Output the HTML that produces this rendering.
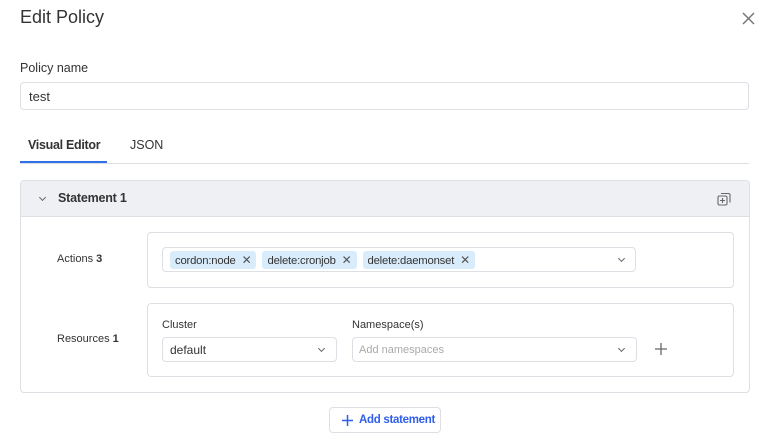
<!DOCTYPE html>
<html><head><style>
*{box-sizing:border-box;margin:0;padding:0}
body{width:768px;height:447px;background:#fff;font-family:"Liberation Sans",sans-serif;color:#333;position:relative;overflow:hidden;font-size:12px}
.a{position:absolute;white-space:nowrap}
.box{position:absolute;border:1px solid #dcdfe4;border-radius:4px;background:#fff}
.chip{display:inline-block;background:#d8ecfb;border-radius:3px;height:18px;line-height:18px;padding:0 5px;margin-right:6px;font-size:11.3px;color:#333;letter-spacing:-0.2px}
.chip span{color:#555;margin-left:6px;font-size:12px}
.chev{position:absolute;width:5px;height:5px;border-right:1.2px solid #666;border-bottom:1.2px solid #666;transform:rotate(45deg)}
</style></head><body>
<div class="a" style="left:20px;top:7px;font-size:18px;color:#333">Edit Policy</div>
<svg class="a" style="left:742px;top:12px" width="13" height="13"><path d="M1 1L12 12M12 1L1 12" stroke="#777" stroke-width="1.5"/></svg>
<div class="a" style="left:20px;top:61px;font-size:12.5px;color:#333">Policy name</div>
<div class="box" style="left:20px;top:82px;width:729px;height:28px"><div class="a" style="left:8px;top:6px;font-size:13px">test</div></div>
<div class="a" style="left:28px;top:138px;font-size:12.5px;font-weight:bold;color:#333;letter-spacing:-0.3px">Visual Editor</div>
<div class="a" style="left:130px;top:138px;font-size:12.5px;color:#333">JSON</div>
<div class="a" style="left:20px;top:163px;width:729px;height:1px;background:#dcdfe4"></div>
<div class="a" style="left:20px;top:161px;width:87px;height:2px;background:#2f6fe8"></div>
<div class="box" style="left:20px;top:180px;width:730px;height:213px;overflow:hidden">
 <div class="a" style="left:0;top:0;width:730px;height:36px;background:#eef0f3;border-bottom:1px solid #dcdfe4"></div>
 <div class="chev" style="left:19px;top:14px"></div>
 <div class="a" style="left:37px;top:10px;font-size:12.5px;font-weight:bold;color:#333;letter-spacing:-0.2px">Statement 1</div>
 <svg class="a" style="left:696px;top:11px" width="14" height="14" fill="none" stroke="#666" stroke-width="1.1"><rect x="1" y="4" width="9" height="9" rx="1.5"/><path d="M4 1.5h7.5a1.5 1.5 0 0 1 1.5 1.5v7.5M5.5 6v5M3 8.5h5"/></svg>
</div>
<div class="a" style="left:57px;top:253px;font-size:11px">Actions <b>3</b></div>
<div class="box" style="left:147px;top:232px;width:587px;height:56px"></div>
<div class="box" style="left:162px;top:247px;width:474px;height:25px;padding:3px 0 0 7px;white-space:nowrap">
 <span class="chip">cordon:node<span>✕</span></span><span class="chip">delete:cronjob<span>✕</span></span><span class="chip">delete:daemonset<span>✕</span></span>
 <div class="chev" style="left:456px;top:8px"></div>
</div>
<div class="a" style="left:57px;top:333px;font-size:11px">Resources <b>1</b></div>
<div class="box" style="left:147px;top:303px;width:587px;height:74px"></div>
<div class="a" style="left:162px;top:319px;font-size:11px">Cluster</div>
<div class="a" style="left:352px;top:319px;font-size:11px">Namespace(s)</div>
<div class="box" style="left:162px;top:337px;width:175px;height:25px"><div class="a" style="left:7px;top:5px;font-size:12px">default</div><div class="chev" style="left:156px;top:8px"></div></div>
<div class="box" style="left:352px;top:337px;width:285px;height:25px"><div class="a" style="left:6px;top:6px;font-size:11px;color:#aaa">Add namespaces</div><div class="chev" style="left:266px;top:8px"></div></div>
<svg class="a" style="left:655px;top:343px" width="12" height="12"><path d="M6 0V12M0 6H12" stroke="#666" stroke-width="1.3"/></svg>
<div class="box" style="left:329px;top:407px;width:112px;height:26px"><svg class="a" style="left:12px;top:7px" width="11" height="11"><path d="M5.5 0V11M0 5.5H11" stroke="#2f5ee8" stroke-width="1.5"/></svg><div class="a" style="left:29px;top:6px;font-size:11.5px;font-weight:bold;color:#2f5ee8;letter-spacing:-0.3px">Add statement</div></div>
</body></html>
